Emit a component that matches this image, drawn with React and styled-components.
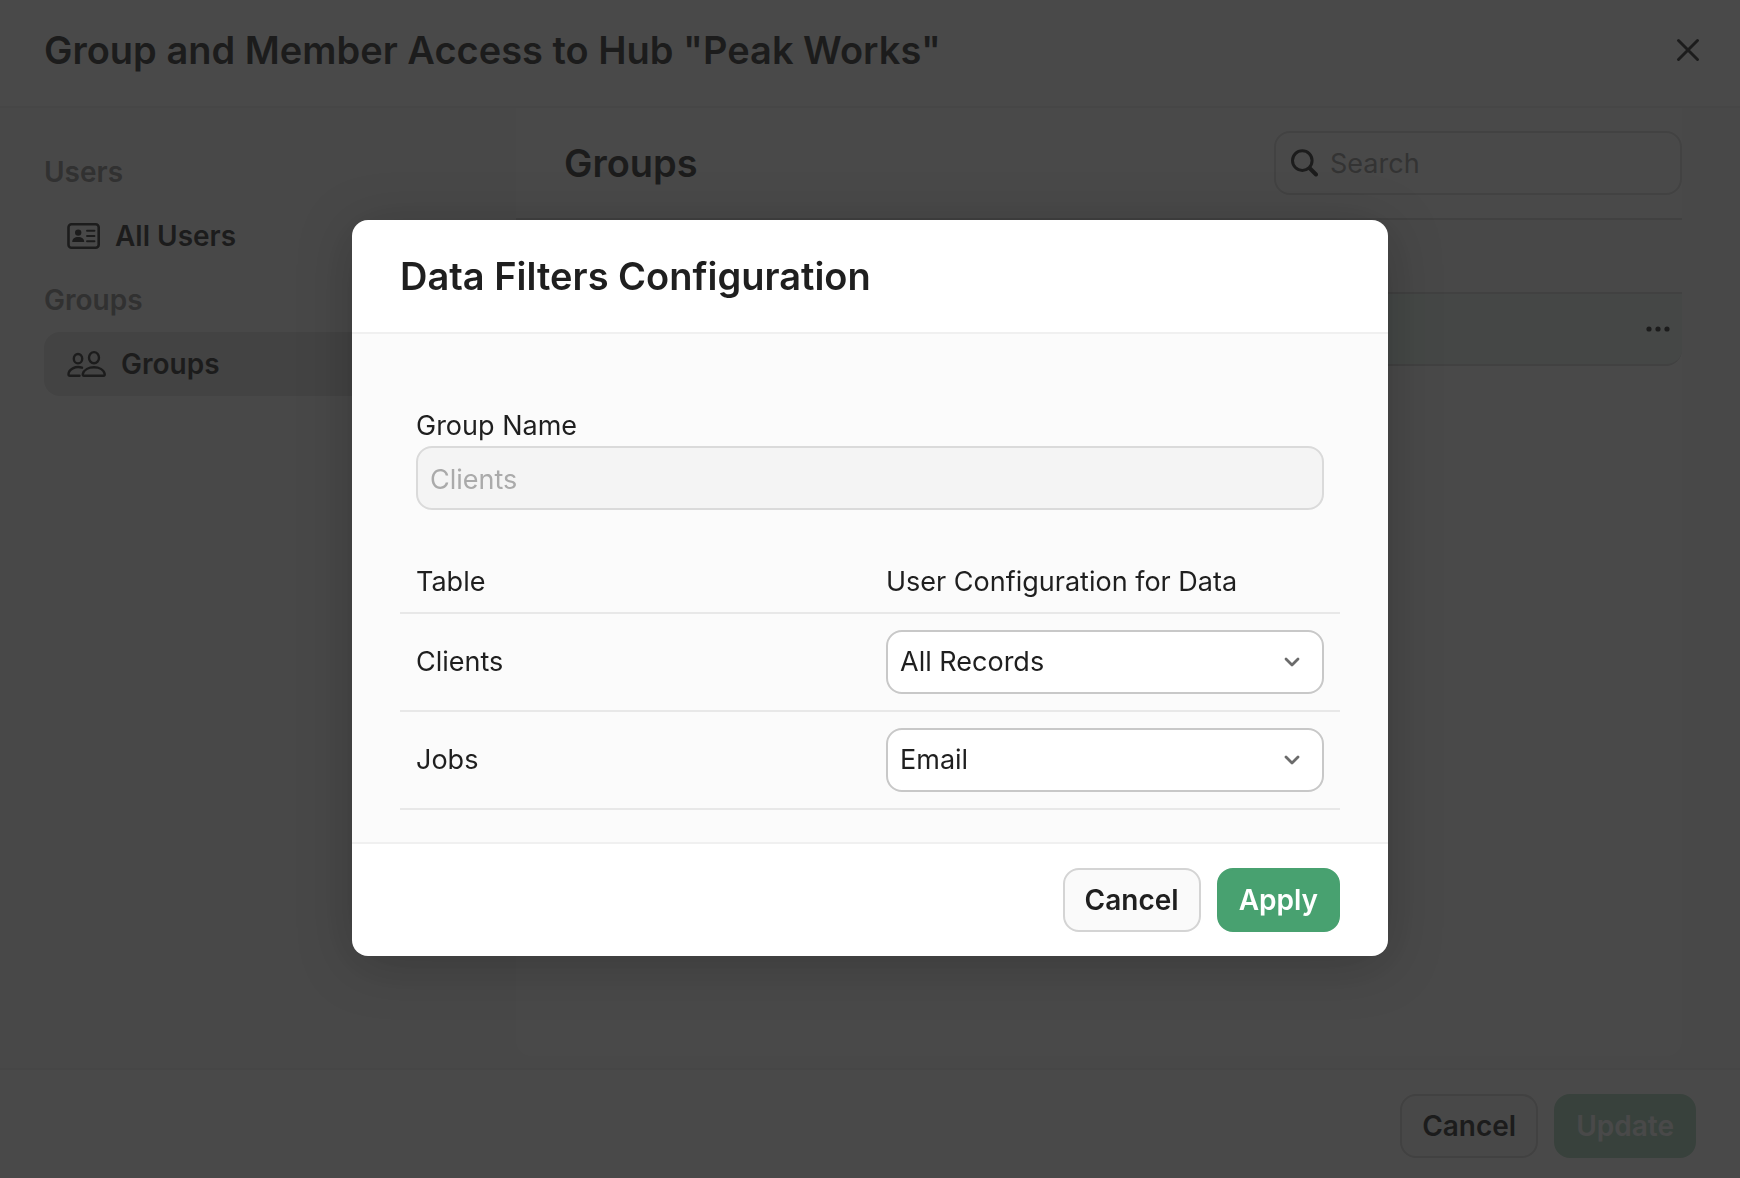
import React from 'react';
import styled, { createGlobalStyle } from 'styled-components';

const GlobalStyle = createGlobalStyle`
  *, *::before, *::after { box-sizing: border-box; }
  body {
    margin: 0;
    font-family: Inter, "Liberation Sans", sans-serif;
    font-size: 27px;
    line-height: 40px;
    color: #1f1f1f;
    background: #ffffff;
  }
  button, input, select { font: inherit; color: inherit; margin: 0; }
`;

const Page = styled.div`
  display: flex;
  flex-direction: column;
  min-height: 100vh;
`;

const PageHeader = styled.header`
  display: flex;
  align-items: center;
  justify-content: space-between;
  height: 108px;
  padding: 0 40px 6px 44px;
  border-bottom: 2px solid #f0f0f0;
`;

const Heading = styled.h2`
  margin: 0;
  font-size: 38px;
  line-height: 48px;
  font-weight: 600;
`;

const IconButton = styled.button`
  display: flex;
  padding: 0;
  border: 0;
  background: none;
`;

const PageBody = styled.div`
  flex: 1;
  display: flex;
  padding-right: 58px;
  background: #fafafa;
`;

const Sidebar = styled.nav`
  width: 516px;
  padding: 32px 44px;
  flex: none;
`;

const SectionLabel = styled.div`
  height: 64px;
  line-height: 64px;
  font-size: 28px;
  font-weight: 600;
  color: #858585;
`;

const NavItem = styled.a`
  display: flex;
  align-items: center;
  gap: 14px;
  height: 64px;
  padding: 0 23px;
  border-radius: 16px;
  font-size: 28px;
  font-weight: 600;
  color: #1f1f1f;
  text-decoration: none;
  background: ${(p) => (p.$active ? '#dedede' : 'transparent')};
`;

const Content = styled.main`
  flex: 1;
  margin-bottom: 12px;
  border-radius: 0 0 16px 16px;
  background: #ffffff;
`;

const ContentHeader = styled.div`
  display: flex;
  align-items: center;
  justify-content: space-between;
  height: 110px;
  padding-left: 48px;
`;

const SearchBox = styled.label`
  display: flex;
  align-items: center;
  gap: 12px;
  width: 408px;
  height: 64px;
  padding: 0 14px;
  border: 2px solid #dadada;
  border-radius: 16px;
`;

const SearchInput = styled.input`
  flex: 1;
  min-width: 0;
  padding: 2px 0 0;
  border: 0;
  outline: 0;
  background: none;
  &::placeholder { color: #8f8f8f; opacity: 1; }
`;

const GroupList = styled.div`
  border-top: 2px solid #d4d4d4;
`;

const ListHead = styled.div`
  height: 74px;
  border-bottom: 2px solid #d4d4d4;
  background: #fafafa;
`;

const ListRow = styled.div`
  display: flex;
  align-items: center;
  justify-content: flex-end;
  height: 72px;
  padding-right: 10px;
  border-bottom: 2px solid #d4d4d4;
  border-radius: 0 0 16px 16px;
  background: #eaf6f0;
`;

const PageFooter = styled.footer`
  display: flex;
  justify-content: flex-end;
  gap: 16px;
  padding: 24px 44px 20px;
  border-top: 2px solid #f0f0f0;
`;

const Button = styled.button`
  height: 64px;
  padding: 0 20px;
  border: 2px solid ${(p) => (p.$primary ? '#48a170' : '#d4d4d4')};
  border-radius: 16px;
  font-size: 28px;
  font-weight: 600;
  color: ${(p) => (p.$primary ? '#ffffff' : '#1f1f1f')};
  background: ${(p) => (p.$primary ? '#48a170' : '#fafafa')};
  &:disabled {
    border-color: #aad5bd;
    background: #aad5bd;
  }
`;

const Overlay = styled.div`
  position: fixed;
  inset: 0;
  display: flex;
  align-items: center;
  justify-content: center;
  padding: 0 20px 2px;
  background: rgba(28, 28, 28, 0.8);
`;

const Dialog = styled.section`
  width: 100%;
  max-width: 1036px;
  border-radius: 16px;
  overflow: hidden;
  background: #ffffff;
  box-shadow: 0 8px 56px rgba(0, 0, 0, 0.22);
`;

const DialogHeader = styled.header`
  padding: 32px 48px;
  border-bottom: 2px solid #f0f0f0;
`;

const DialogBody = styled.div`
  padding: 72px 48px 32px;
  background: #fbfbfb;
`;

const Field = styled.div`
  display: flex;
  flex-direction: column;
  padding: 0 16px 48px;
`;

const TextInput = styled.input`
  height: 64px;
  padding: 2px 12px 0;
  border: 2px solid #dadada;
  border-radius: 16px;
  background: #f4f4f4;
  &:disabled { color: #aaaaaa; }
`;

const Table = styled.table`
  width: 100%;
  table-layout: fixed;
  border-collapse: separate;
  border-spacing: 0;
`;

const HeadCell = styled.th`
  height: 56px;
  padding: 4px 16px 10px;
  border-bottom: 2px solid #e8e8e8;
  text-align: left;
  font-weight: 400;
`;

const Cell = styled.td`
  padding: 16px;
  border-bottom: 2px solid #e8e8e8;
`;

const SelectWrap = styled.div`
  display: grid;
  align-items: center;
  & > * { grid-area: 1 / 1; }
  & > svg { justify-self: end; margin-right: 24px; pointer-events: none; }
`;

const Select = styled.select`
  appearance: none;
  width: 100%;
  height: 64px;
  padding: 0 56px 0 12px;
  border: 2px solid #c8c8c8;
  border-radius: 16px;
  background: #ffffff;
`;

const DialogFooter = styled.footer`
  display: flex;
  justify-content: flex-end;
  gap: 16px;
  padding: 24px 48px;
  border-top: 2px solid #f0f0f0;
`;

const CloseIcon = () => (
  <svg width="24" height="24" viewBox="0 0 24 24" fill="none" stroke="#1f1f1f" strokeWidth="3" strokeLinecap="round" aria-hidden="true">
    <path d="M2.5 2.5 21.5 21.5M21.5 2.5 2.5 21.5" />
  </svg>
);

const CardIcon = () => (
  <svg width="34" height="26" viewBox="0 0 34 26" fill="none" stroke="#1f1f1f" strokeLinecap="round" aria-hidden="true">
    <rect x="1.5" y="1.3" width="30.200" height="23.400" rx="3" strokeWidth="2.600" />
    <circle cx="11.2" cy="9.6" r="3.2" fill="#1f1f1f" stroke="none" />
    <path d="M5.2 18.900c0-3.300 2.400-5 6-5s6 1.700 6 5z" fill="#1f1f1f" stroke="none" />
    <path d="M20 7.800h7.500M20 13h7.500M20 18.200h7.500" strokeWidth="1.900" />
  </svg>
);

const GroupIcon = () => (
  <svg width="40" height="28" viewBox="0 0 40 28" fill="none" stroke="#1f1f1f" strokeWidth="2.400" strokeLinecap="round" strokeLinejoin="round" aria-hidden="true">
    <ellipse cx="11" cy="8.700" rx="4.200" ry="4.700" />
    <ellipse cx="27" cy="7.700" rx="5" ry="5.600" />
    <path d="M15 17.700c-6.500-2.200-13.500 1.800-13.500 6.600q0 1.400 1.500 1.400H12.500" />
    <path d="M17 25.700h19.500q1.500 0 1.200-1.700C36 15 18 15 15.800 24q-.3 1.700 1.200 1.700z" />
  </svg>
);

const SearchIcon = () => (
  <svg width="28" height="28" viewBox="0 0 28 28" fill="none" stroke="#1f1f1f" strokeLinecap="round" aria-hidden="true">
    <circle cx="12.300" cy="11.600" r="9.800" strokeWidth="3" />
    <path d="m20 19.500 6 6" strokeWidth="4" />
  </svg>
);

const MoreIcon = () => (
  <svg width="28" height="8" viewBox="0 0 28 8" fill="#1f1f1f" aria-hidden="true">
    <circle cx="5" cy="4" r="2.600" />
    <circle cx="14" cy="4" r="2.600" />
    <circle cx="23" cy="4" r="2.600" />
  </svg>
);

const ChevronIcon = () => (
  <svg width="16" height="10" viewBox="0 0 16 10" fill="none" stroke="#6b6b6b" strokeWidth="2.800" strokeLinecap="round" strokeLinejoin="round" aria-hidden="true">
    <path d="m2 2 6 6 6-6" />
  </svg>
);

const tables = [
  { name: 'Clients', value: 'All Records' },
  { name: 'Jobs', value: 'Email' },
];

export default function App() {
  return (
    <>
      <GlobalStyle />
      <Page>
        <PageHeader>
          <Heading as="h1">Group and Member Access to Hub "Peak Works"</Heading>
          <IconButton type="button" aria-label="Close"><CloseIcon /></IconButton>
        </PageHeader>
        <PageBody>
          <Sidebar>
            <SectionLabel>Users</SectionLabel>
            <NavItem href="#users"><CardIcon />All Users</NavItem>
            <SectionLabel>Groups</SectionLabel>
            <NavItem href="#groups" $active><GroupIcon />Groups</NavItem>
          </Sidebar>
          <Content>
            <ContentHeader>
              <Heading>Groups</Heading>
              <SearchBox>
                <SearchIcon />
                <SearchInput type="search" placeholder="Search" aria-label="Search" />
              </SearchBox>
            </ContentHeader>
            <GroupList>
              <ListHead />
              <ListRow>
                <IconButton type="button" aria-label="More"><MoreIcon /></IconButton>
              </ListRow>
            </GroupList>
          </Content>
        </PageBody>
        <PageFooter>
          <Button type="button">Cancel</Button>
          <Button type="button" $primary disabled>Update</Button>
        </PageFooter>
      </Page>
      <Overlay>
        <Dialog role="dialog" aria-modal="true" aria-labelledby="dialog-title">
          <DialogHeader>
            <Heading id="dialog-title">Data Filters Configuration</Heading>
          </DialogHeader>
          <DialogBody>
            <Field>
              <label htmlFor="group-name">Group Name</label>
              <TextInput id="group-name" type="text" defaultValue="Clients" disabled />
            </Field>
            <Table>
              <thead>
                <tr>
                  <HeadCell scope="col">Table</HeadCell>
                  <HeadCell scope="col">User Configuration for Data</HeadCell>
                </tr>
              </thead>
              <tbody>
                {tables.map((t) => (
                  <tr key={t.name}>
                    <Cell>{t.name}</Cell>
                    <Cell>
                      <SelectWrap>
                        <Select aria-label={t.name} defaultValue={t.value}>
                          <option>All Records</option>
                          <option>Email</option>
                        </Select>
                        <ChevronIcon />
                      </SelectWrap>
                    </Cell>
                  </tr>
                ))}
              </tbody>
            </Table>
          </DialogBody>
          <DialogFooter>
            <Button type="button">Cancel</Button>
            <Button type="button" $primary>Apply</Button>
          </DialogFooter>
        </Dialog>
      </Overlay>
    </>
  );
}
